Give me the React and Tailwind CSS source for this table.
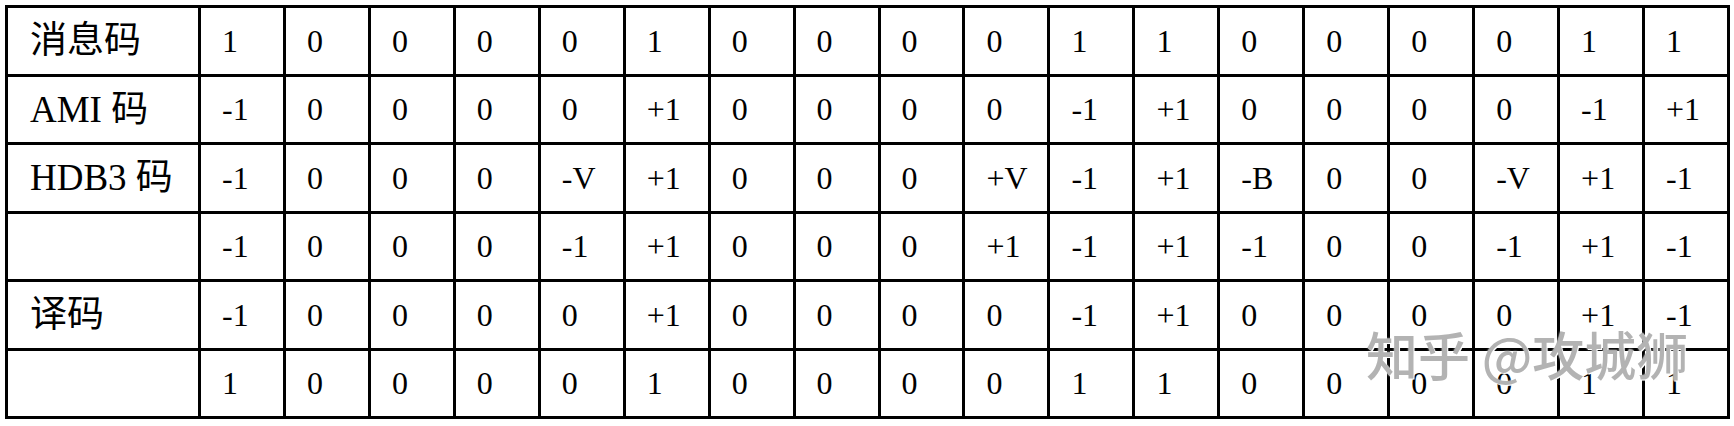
const rows = [
  { label: "消息码", cells: ["1", "0", "0", "0", "0", "1", "0", "0", "0", "0", "1", "1", "0", "0", "0", "0", "1", "1"] },
  { label: "AMI 码", cells: ["-1", "0", "0", "0", "0", "+1", "0", "0", "0", "0", "-1", "+1", "0", "0", "0", "0", "-1", "+1"] },
  { label: "HDB3 码", cells: ["-1", "0", "0", "0", "-V", "+1", "0", "0", "0", "+V", "-1", "+1", "-B", "0", "0", "-V", "+1", "-1"] },
  { label: "", cells: ["-1", "0", "0", "0", "-1", "+1", "0", "0", "0", "+1", "-1", "+1", "-1", "0", "0", "-1", "+1", "-1"] },
  { label: "译码", cells: ["-1", "0", "0", "0", "0", "+1", "0", "0", "0", "0", "-1", "+1", "0", "0", "0", "0", "+1", "-1"] },
  { label: "", cells: ["1", "0", "0", "0", "0", "1", "0", "0", "0", "0", "1", "1", "0", "0", "0", "0", "1", "1"] },
];

const App = () => {
  return (
    <div className="relative w-[1734px] h-[426px] bg-white overflow-hidden">
      <div className="ml-[5px] mt-[5px] w-[1725px] bg-black p-[3px] grid grid-cols-[190px_repeat(18,minmax(0,1fr))] gap-[3px] font-['Liberation_Serif','Noto_Sans_CJK_SC',serif] text-[32px] leading-none text-black">
        {rows.map((row, i) => (
          <div key={i} className="contents">
            <div className="bg-white h-[65.5px] flex items-center pl-[22px] text-[37px] whitespace-nowrap">
              {row.label}
            </div>
            {row.cells.map((v, j) => (
              <div key={j} className="bg-white h-[65.5px] flex items-center pl-[21px]">
                {v}
              </div>
            ))}
          </div>
        ))}
      </div>

      {/* zhihu watermark */}
      <div className="absolute left-[1366px] top-[328px] font-['Noto_Sans_CJK_SC',sans-serif] font-medium text-[52px] leading-none text-[#a6a6a6]/85 whitespace-nowrap [text-shadow:0_0_2px_#fff,1px_1px_0_#fff]">
        知乎 @攻城狮
      </div>
    </div>
  );
};

export default App;
